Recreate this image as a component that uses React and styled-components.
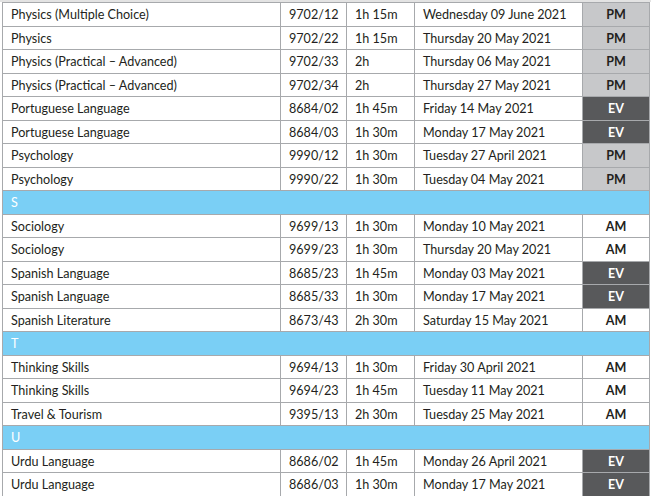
import React from "react";
import styled, { createGlobalStyle } from "styled-components";

const Global = createGlobalStyle`
  html, body { margin: 0; padding: 0; background: #ffffff; }
  body { font-family: "Lato", "Open Sans", sans-serif; color: #231f20; }
`;

const Page = styled.div`
  padding: 2px 2px 0 2px;
  background: linear-gradient(#e3e3e3, #e3e3e3) top / 100% 2px no-repeat;
`;

const Table = styled.table`
  width: 647px;
  border-collapse: collapse;
  table-layout: fixed;
  font-size: 12.6px;
`;

const Row = styled.tr`
  height: 23.5px;
`;

const Cell = styled.td`
  border: 1px solid #a7a9ac;
  padding: 2px 0 0 8px;
  height: 20.5px;
  line-height: 16px;
  white-space: nowrap;
  overflow: hidden;
  vertical-align: middle;
`;

const SessionCell = styled.td`
  border: 1px solid #a7a9ac;
  padding-top: 2px;
  text-align: center;
  font-weight: 700;
  font-size: 12.5px;
  background: ${(p) => (p.$s === "PM" ? "#c7c8ca" : p.$s === "EV" ? "#58595b" : "#ffffff")};
  color: ${(p) => (p.$s === "EV" ? "#ffffff" : "#231f20")};
`;

const LetterCell = styled.td`
  background: #7acff5;
  color: #ffffff;
  border: 1px solid #a7a9ac;
  padding: 2px 0 0 8px;
  font-size: 12.6px;
  line-height: 16px;
`;

const rows = [
  ["Physics (Multiple Choice)", "9702/12", "1h 15m", "Wednesday 09 June 2021", "PM"],
  ["Physics", "9702/22", "1h 15m", "Thursday 20 May 2021", "PM"],
  ["Physics (Practical – Advanced)", "9702/33", "2h", "Thursday 06 May 2021", "PM"],
  ["Physics (Practical – Advanced)", "9702/34", "2h", "Thursday 27 May 2021", "PM"],
  ["Portuguese Language", "8684/02", "1h 45m", "Friday 14 May 2021", "EV"],
  ["Portuguese Language", "8684/03", "1h 30m", "Monday 17 May 2021", "EV"],
  ["Psychology", "9990/12", "1h 30m", "Tuesday 27 April 2021", "PM"],
  ["Psychology", "9990/22", "1h 30m", "Tuesday 04 May 2021", "PM"],
  "S",
  ["Sociology", "9699/13", "1h 30m", "Monday 10 May 2021", "AM"],
  ["Sociology", "9699/23", "1h 30m", "Thursday 20 May 2021", "AM"],
  ["Spanish Language", "8685/23", "1h 45m", "Monday 03 May 2021", "EV"],
  ["Spanish Language", "8685/33", "1h 30m", "Monday 17 May 2021", "EV"],
  ["Spanish Literature", "8673/43", "2h 30m", "Saturday 15 May 2021", "AM"],
  "T",
  ["Thinking Skills", "9694/13", "1h 30m", "Friday 30 April 2021", "AM"],
  ["Thinking Skills", "9694/23", "1h 45m", "Tuesday 11 May 2021", "AM"],
  ["Travel & Tourism", "9395/13", "2h 30m", "Tuesday 25 May 2021", "AM"],
  "U",
  ["Urdu Language", "8686/02", "1h 45m", "Monday 26 April 2021", "EV"],
  ["Urdu Language", "8686/03", "1h 30m", "Monday 17 May 2021", "EV"],
];

export default function App() {
  return (
    <>
      <Global />
      <Page>
        <Table>
          <colgroup>
            <col style={{ width: 278 }} />
            <col style={{ width: 66 }} />
            <col style={{ width: 68 }} />
            <col style={{ width: 168 }} />
            <col style={{ width: 67 }} />
          </colgroup>
          <tbody>
            {rows.map((r, i) =>
              typeof r === "string" ? (
                <Row key={i}>
                  <LetterCell colSpan={5}>{r}</LetterCell>
                </Row>
              ) : (
                <Row key={i}>
                  <Cell>{r[0]}</Cell>
                  <Cell>{r[1]}</Cell>
                  <Cell>{r[2]}</Cell>
                  <Cell>{r[3]}</Cell>
                  <SessionCell $s={r[4]}>{r[4]}</SessionCell>
                </Row>
              )
            )}
          </tbody>
        </Table>
      </Page>
    </>
  );
}
